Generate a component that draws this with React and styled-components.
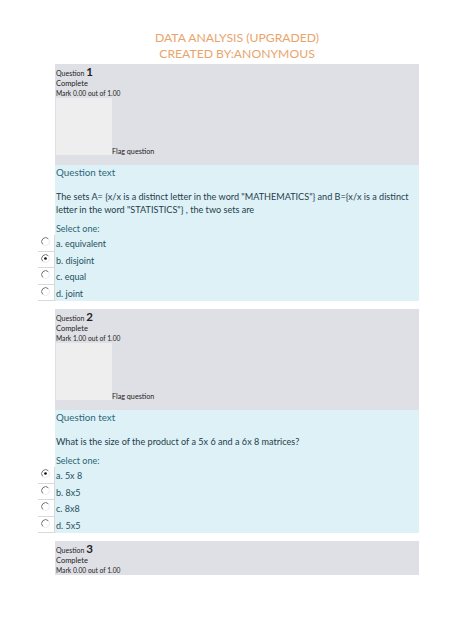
import React from 'react';
import styled, { createGlobalStyle } from 'styled-components';

const Global = createGlobalStyle`
  body {
    margin: 0;
    background: #ffffff;
    font-family: Lato, "Open Sans", sans-serif;
  }
`;

const questions = [
  {
    num: 1,
    mark: 'Mark 0.00 out of 1.00',
    text: [
      'The sets  A= {x/x is a distinct letter in the word "MATHEMATICS"} and B={x/x is a distinct',
      'letter in the word "STATISTICS"} , the two sets are',
    ],
    options: ['a. equivalent', 'b. disjoint', 'c. equal', 'd. joint'],
    picked: 1,
  },
  {
    num: 2,
    mark: 'Mark 1.00 out of 1.00',
    text: ['What is the size of the product of a 5x 6 and a 6x 8 matrices?'],
    options: ['a. 5x 8', 'b. 8x5', 'c. 8x8', 'd. 5x5'],
    picked: 0,
  },
];

const Radio = ({ on }) => (
  <svg width="9" height="9" viewBox="0 0 10 10">
    <circle cx="5" cy="5" r="4.3" fill="#ffffff" />
    <path d="M2 8.2 A4.3 4.3 0 0 1 8.2 2" fill="none" stroke="#6f6f6f" strokeWidth="1.1" />
    <path d="M8.2 2 A4.3 4.3 0 0 1 2 8.2" fill="none" stroke="#e8e8e8" strokeWidth="1" />
    {on && <circle cx="5" cy="5" r="1.5" fill="#111" />}
  </svg>
);

const Question = ({ q }) => (
  <Card>
    <Info>
      <QLabel>
        Question <b>{q.num}</b>
      </QLabel>
      <Small>Complete</Small>
      <Mark>{q.mark}</Mark>
      <FlagRow>
        <FlagBox />
        <FlagText>Flag question</FlagText>
      </FlagRow>
    </Info>
    <Content>
      <Heading>Question text</Heading>
      <Body>
        {q.text.map((t) => (
          <div key={t}>{t}</div>
        ))}
      </Body>
      <Select>Select one:</Select>
      {q.options.map((o, i) => (
        <Option key={o}>
          <RadioCell>
            <Radio on={i === q.picked} />
          </RadioCell>
          <OptText>{o}</OptText>
        </Option>
      ))}
    </Content>
  </Card>
);

const App = () => (
  <Page>
    <Global />
    <Title>
      DATA ANALYSIS (UPGRADED)
      <br />
      CREATED BY:ANONYMOUS
    </Title>
    <Column>
      {questions.map((q) => (
        <Question key={q.num} q={q} />
      ))}
      <Card>
        <Info $short>
          <QLabel>
            Question <b>3</b>
          </QLabel>
          <Small>Complete</Small>
          <Mark>Mark 0.00 out of 1.00</Mark>
        </Info>
      </Card>
    </Column>
  </Page>
);

const Page = styled.div`
  width: 474px;
  height: 632px;
  padding-top: 30px;
  box-sizing: border-box;
  overflow: hidden;
`;

const Title = styled.div`
  text-align: center;
  color: #e9a46c;
  font-size: 12.2px;
  line-height: 16px;
  margin-bottom: 2px;
`;

const Column = styled.div`
  width: 364px;
  margin-left: 55px;
  display: flex;
  flex-direction: column;
  gap: 8px;
`;

const Card = styled.div`
  display: flex;
  flex-direction: column;
`;

const Info = styled.div`
  background: #dfe0e5;
  padding: 2px 0 ${(p) => (p.$short ? '0' : '10px')} 1px;
  color: #222;
`;

const QLabel = styled.div`
  font-size: 7px;
  line-height: 12px;
  b {
    font-size: 11.5px;
    font-weight: 700;
  }
`;

const Small = styled.div`
  font-size: 7.5px;
  line-height: 10px;
`;

const Mark = styled.div`
  font-size: 6.7px;
  line-height: 9px;
`;

const FlagRow = styled.div`
  display: flex;
  align-items: flex-end;
`;

const FlagBox = styled.div`
  width: 56px;
  height: 57px;
  background: #eeeeee;
`;

const FlagText = styled.div`
  font-size: 7.2px;
  line-height: 10px;
  margin-bottom: -2px;
`;

const Content = styled.div`
  background: #def1f7;
  padding-left: 1px;
`;

const Heading = styled.div`
  color: #2c6776;
  font-size: 9.8px;
  line-height: 14px;
`;

const Body = styled.div`
  margin-top: 11px;
  color: #1f3d4a;
  font-size: 9.1px;
  line-height: 13px;
`;

const Select = styled.div`
  margin-top: 6px;
  color: #2a6470;
  font-size: 9px;
  line-height: 13px;
`;

const Option = styled.div`
  display: flex;
  height: 16.5px;
  margin-left: -18px;
`;

const RadioCell = styled.div`
  width: 17px;
  box-sizing: border-box;
  background: #ffffff;
  border-bottom: 1px solid #d9d9d9;
  border-right: 1px solid #d9d9d9;
  padding: 2px 0 0 3px;
  display: flex;
  align-items: flex-start;
`;

const OptText = styled.div`
  color: #24505e;
  font-size: 9px;
  line-height: 16.5px;
  padding-left: 1px;
  padding-top: 1px;
`;

export default App;
